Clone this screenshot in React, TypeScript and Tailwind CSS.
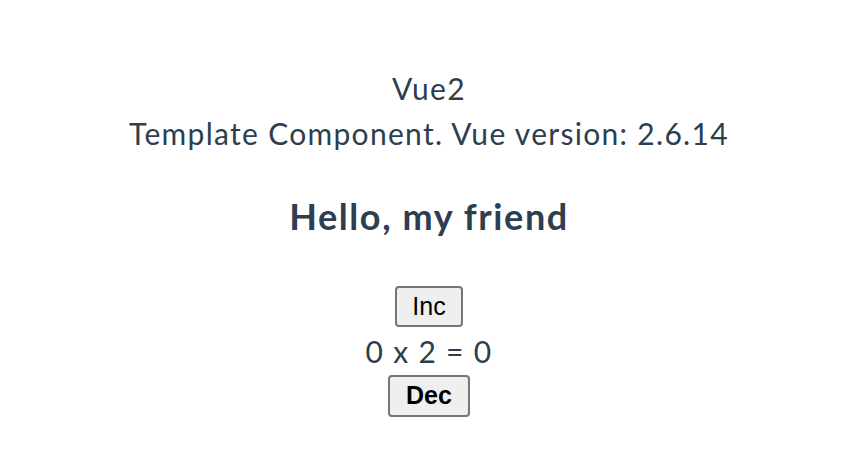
import React, { useState } from "react";

const App = () => {
  const [count, setCount] = useState(0);
  return (
    <div className="min-h-screen bg-white pt-[66px] text-center text-[#2c3e50] font-['Lato','Noto_Sans',sans-serif]">
      <div className="text-[30px] leading-[45px] tracking-[1.3px]">Vue2</div>
      <div className="text-[30px] leading-[45px] tracking-[1.3px]">
        Template Component. Vue version: 2.6.14
      </div>

      <h3 className="mt-[35px] text-[36px] leading-[50px] font-bold tracking-[1.6px]">
        Hello, my friend
      </h3>

      <div className="mt-[45px] flex flex-col items-center">
        <button
          onClick={() => setCount(count + 1)}
          className="h-[41px] px-[15px] bg-[#efefef] border-2 border-[#767676] rounded-[4px] text-black text-[25px] font-['Liberation_Sans',Arial,sans-serif]"
        >
          Inc
        </button>
        <div className="text-[30px] leading-[48px] tracking-[1.3px]">
          {count} x 2 = {count * 2}
        </div>
        <button
          onClick={() => setCount(count - 1)}
          className="h-[42px] px-[16px] bg-[#efefef] border-2 border-[#767676] rounded-[4px] text-black text-[25px] font-bold font-['Liberation_Sans',Arial,sans-serif]"
        >
          Dec
        </button>
      </div>
    </div>
  );
};

export default App;
